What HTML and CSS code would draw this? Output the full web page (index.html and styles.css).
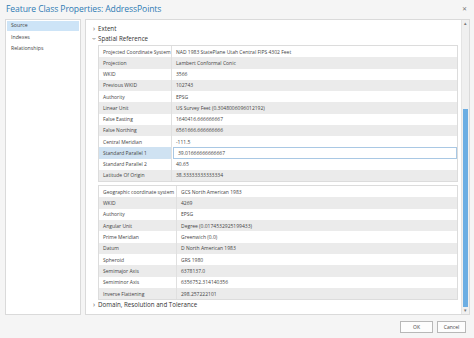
FILE: index.html
```html
<!DOCTYPE html>
<html lang="en">
<head>
  <meta charset="UTF-8">
  <title>Feature Class Properties: AddressPoints</title>
  <link rel="stylesheet" href="styles.css">
</head>
<body>
  <div class="window">
    <div class="titlebar">
      <span class="title">Feature Class Properties: AddressPoints</span>
      <span class="close">&#x2715;</span>
    </div>

    <div class="main">
      <div class="nav">
        <div class="nav-item active">Source</div>
        <div class="nav-item">Indexes</div>
        <div class="nav-item">Relationships</div>
      </div>

      <div class="content">
        <div class="scroll-area">
          <div class="section"><span class="chev">&#x203A;</span>Extent</div>
          <div class="section"><span class="chev open">&#x203A;</span>Spatial Reference</div>

          <div class="props props-proj">
            <div class="cell label">Projected Coordinate System</div><div class="cell">NAD 1983 StatePlane Utah Central FIPS 4302 Feet</div>
            <div class="cell label alt">Projection</div><div class="cell alt">Lambert Conformal Conic</div>
            <div class="cell label">WKID</div><div class="cell">3566</div>
            <div class="cell label alt">Previous WKID</div><div class="cell alt">102743</div>
            <div class="cell label">Authority</div><div class="cell">EPSG</div>
            <div class="cell label alt">Linear Unit</div><div class="cell alt">US Survey Feet (0.3048006096012192)</div>
            <div class="cell label">False Easting</div><div class="cell">1640416.666666667</div>
            <div class="cell label alt">False Northing</div><div class="cell alt">6561666.666666666</div>
            <div class="cell label">Central Meridian</div><div class="cell">-111.5</div>
            <div class="cell label selected">Standard Parallel 1</div><div class="cell editing">39.01666666666667</div>
            <div class="cell label">Standard Parallel 2</div><div class="cell">40.65</div>
            <div class="cell label alt">Latitude Of Origin</div><div class="cell alt">38.33333333333334</div>
          </div>

          <div class="props props-geo">
            <div class="cell label">Geographic coordinate system</div><div class="cell">GCS North American 1983</div>
            <div class="cell label alt">WKID</div><div class="cell alt">4269</div>
            <div class="cell label">Authority</div><div class="cell">EPSG</div>
            <div class="cell label alt">Angular Unit</div><div class="cell alt">Degree (0.0174532925199433)</div>
            <div class="cell label">Prime Meridian</div><div class="cell">Greenwich (0.0)</div>
            <div class="cell label alt">Datum</div><div class="cell alt">D North American 1983</div>
            <div class="cell label">Spheroid</div><div class="cell">GRS 1980</div>
            <div class="cell label alt">Semimajor Axis</div><div class="cell alt">6378137.0</div>
            <div class="cell label">Semiminor Axis</div><div class="cell">6356752.314140356</div>
            <div class="cell label alt">Inverse Flattening</div><div class="cell alt">298.257222101</div>
          </div>

          <div class="section"><span class="chev">&#x203A;</span>Domain, Resolution and Tolerance</div>
        </div>

        <div class="scrollbar">
          <span class="arrow">&#x25B4;</span>
          <div class="track"><div class="thumb"></div></div>
          <span class="arrow">&#x25BE;</span>
        </div>
      </div>
    </div>

    <div class="footer">
      <button class="btn">OK</button>
      <button class="btn">Cancel</button>
    </div>
  </div>
</body>
</html>
```

FILE: styles.css
```css
* {
  box-sizing: border-box;
}

body {
  margin: 0;
  font-family: 'Open Sans', 'Noto Sans', sans-serif;
  color: #333;
  background: #f5f5f5;
}

.window {
  width: 474px;
  height: 338px;
  display: flex;
  flex-direction: column;
  background: #f5f5f5;
}

.titlebar {
  height: 19px;
  display: flex;
  align-items: center;
  justify-content: space-between;
  padding: 0 7px 2px 6px;
}

.title {
  font-size: 8.6px;
  color: #2e7bb4;
  letter-spacing: -0.1px;
}

.close {
  font-size: 6px;
  color: #777;
}

.main {
  flex: 1;
  display: flex;
  gap: 4px;
  padding: 0 4px 0 5px;
}

.nav {
  width: 76px;
  height: 296px;
  background: #fff;
  border: 1px solid #dadada;
  padding: 1px;
  font-size: 5.2px;
}

.nav-item {
  height: 11px;
  line-height: 11px;
  padding-left: 4px;
  color: #444;
}

.nav-item.active {
  background: #cde4f7;
  height: 9.5px;
  line-height: 9.5px;
  margin-bottom: 1px;
}

.content {
  flex: 1;
  height: 296px;
  background: #fff;
  border: 1px solid #dadada;
  display: flex;
}

.scroll-area {
  flex: 1;
  padding: 4px 3px 0 4px;
  overflow: hidden;
}

.section {
  font-size: 6.2px;
  color: #333;
  height: 9.5px;
  line-height: 9.5px;
  display: flex;
  align-items: center;
}

.chev {
  display: inline-block;
  width: 8px;
  font-size: 7px;
  color: #555;
  text-align: center;
}

.chev.open {
  transform: rotate(90deg);
}

.props {
  display: grid;
  margin: 2px 0 3px 8px;
  border: 1px solid #dcdcdc;
  font-size: 5px;
  color: #444;
}

.props-proj {
  grid-template-columns: 73px 1fr;
  grid-auto-rows: 11.25px;
}

.props-geo {
  grid-template-columns: 78px 1fr;
  grid-auto-rows: 11.35px;
  margin-bottom: 0;
}

.cell {
  padding-left: 4px;
  display: flex;
  align-items: center;
  white-space: nowrap;
  overflow: hidden;
}

.cell.label {
  border-right: 1px solid #e0e0e0;
}

.cell.alt {
  background: #ebebeb;
}

.cell.selected {
  background: #cfe2f2;
}

.cell.editing {
  border: 1px solid #a9c8e4;
  margin-left: 1px;
  background: #fff;
}

.scrollbar {
  width: 8px;
  display: flex;
  flex-direction: column;
  align-items: center;
  background: #f0f0f0;
  border-left: 1px solid #e4e4e4;
}

.arrow {
  font-size: 5px;
  color: #777;
  height: 7px;
  line-height: 7px;
}

.track {
  flex: 1;
  width: 100%;
  display: flex;
  flex-direction: column;
  justify-content: flex-end;
  padding: 0 1px;
}

.thumb {
  height: 198px;
  background: #6caee3;
}

.footer {
  height: 23px;
  display: flex;
  justify-content: flex-end;
  align-items: center;
  gap: 4px;
  padding: 0 8px 0 0;
}

.btn {
  width: 33px;
  height: 12px;
  padding: 0;
  font-family: inherit;
  font-size: 5px;
  color: #444;
  background: #fdfdfd;
  border: 1px solid #b8b8b8;
}

.btn + .btn {
  width: 29px;
}
```
